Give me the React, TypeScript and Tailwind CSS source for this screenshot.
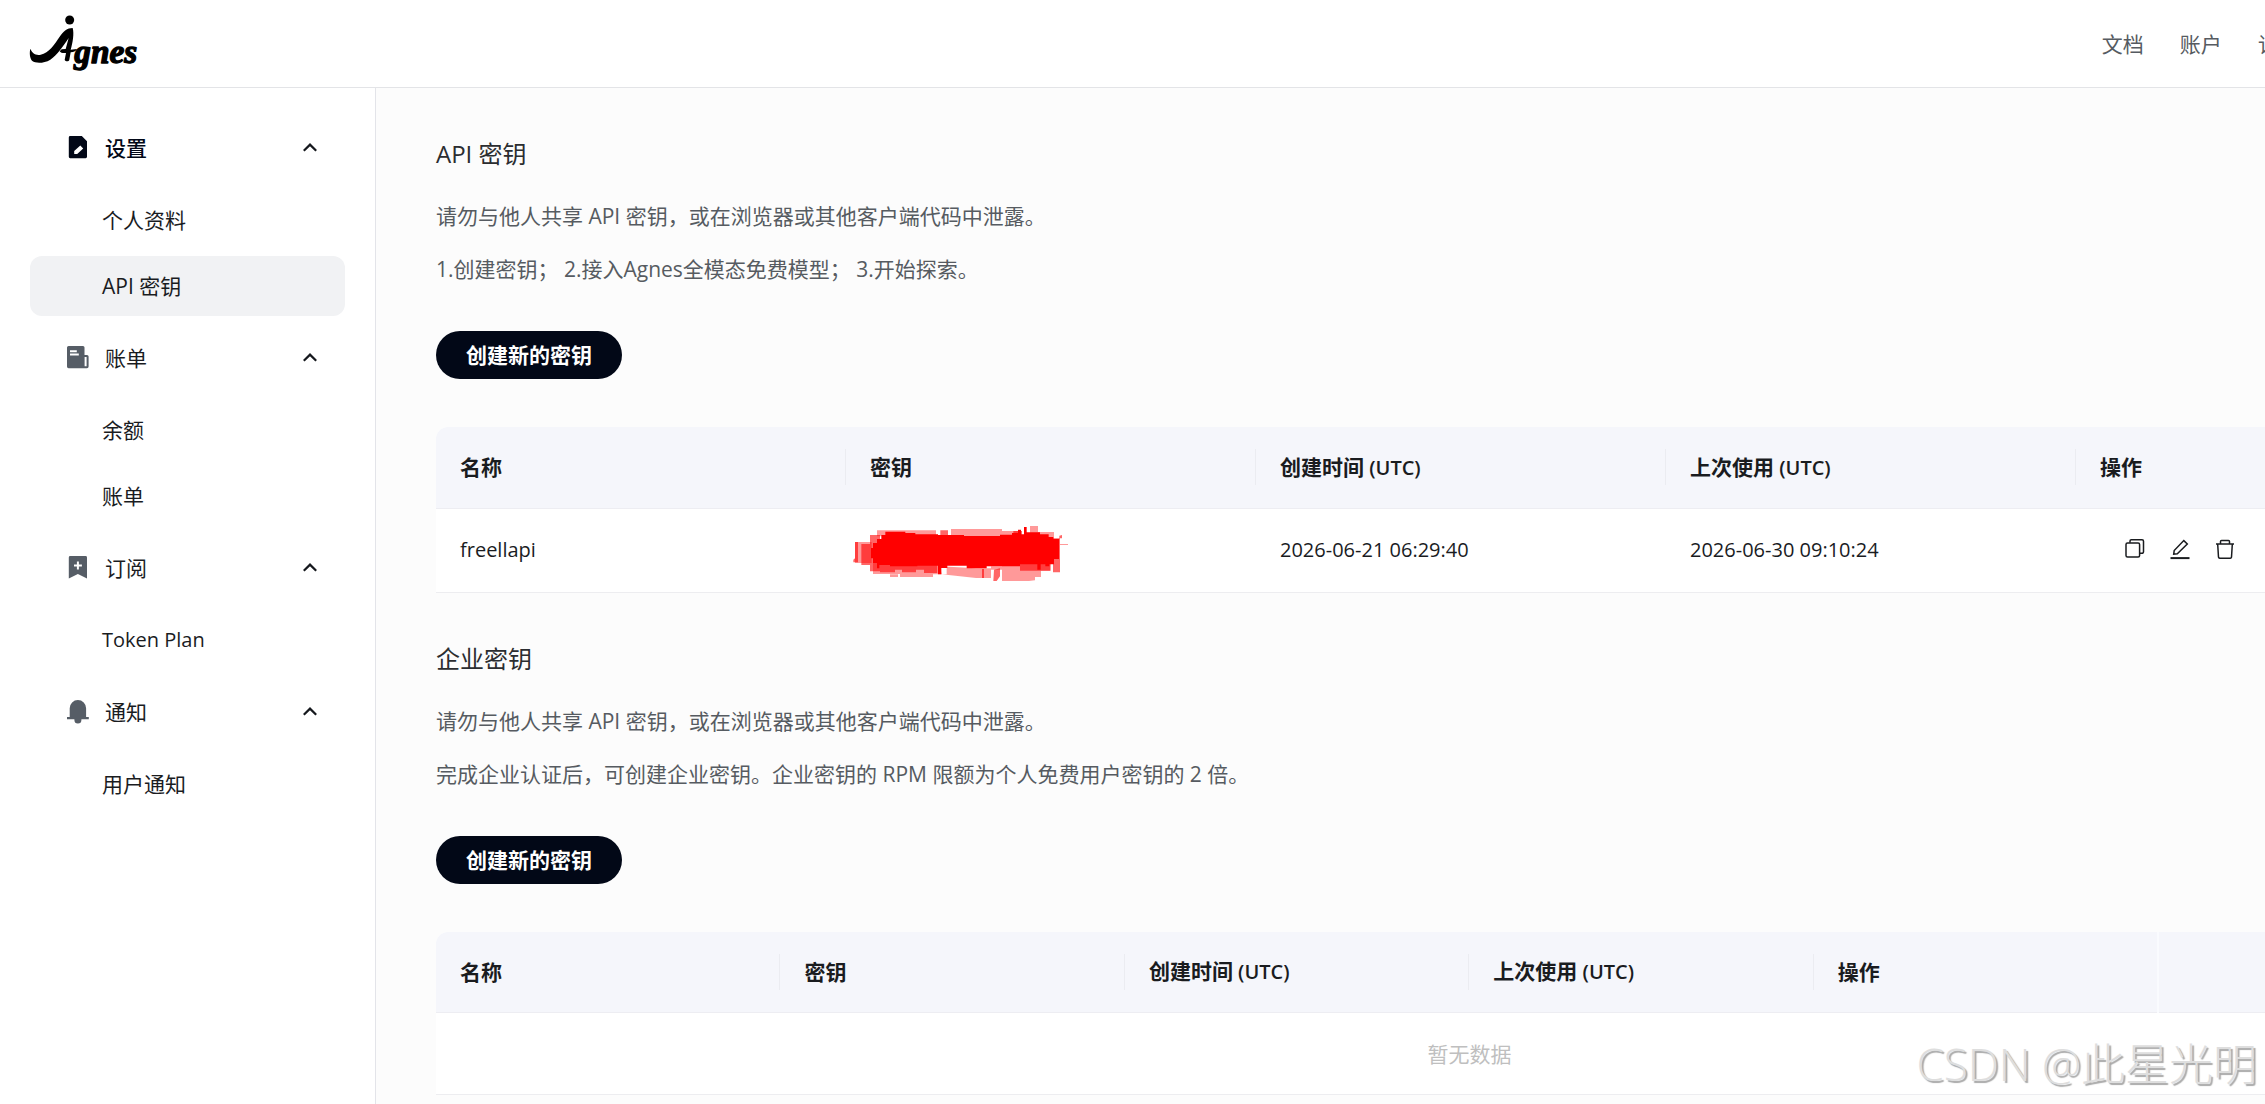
import type { ReactNode } from "react";

const SettingsIcon = () => (
  <svg viewBox="0 0 24 24" className="size-6 text-[#020817]" aria-hidden="true">
    <path
      fill="currentColor"
      fillRule="evenodd"
      d="M4.2 0H15.8L21 5.2V20.8A1.4 1.4 0 0 1 19.6 22.2H4.2A1.4 1.4 0 0 1 2.8 20.8V1.4A1.4 1.4 0 0 1 4.2 0ZM14.3 9.4L8.2 15V18.1H11.2L17.2 12.4Z"
    />
  </svg>
);

const BillIcon = () => (
  <svg viewBox="0 0 24 24" className="size-6 text-[#565d66]" aria-hidden="true">
    <path
      fill="currentColor"
      fillRule="evenodd"
      d="M2.6 0H17A1.5 1.5 0 0 1 18.5 1.5V9H21A1.6 1.6 0 0 1 22.6 10.6V20.6A1.6 1.6 0 0 1 21 22.2H2.6A1.6 1.6 0 0 1 1 20.6V1.6A1.6 1.6 0 0 1 2.6 0ZM4 4.2V6.2H10.8V4.2ZM4 7.6V9.600H12.8V7.6ZM18.6 11V20.2H20.6V11Z"
    />
  </svg>
);

const SubscribeIcon = () => (
  <svg viewBox="0 0 24 24" className="size-6 text-[#565d66]" aria-hidden="true">
    <path
      fill="currentColor"
      fillRule="evenodd"
      d="M4.2 0H19.6A1.4 1.4 0 0 1 21 1.4V22.4L11.9 18L2.8 22.4V1.4A1.4 1.4 0 0 1 4.2 0ZM10.9 5.4V8.4H8V10.4H10.9V13.4H12.9V10.4H15.9V8.4H12.9V5.4Z"
    />
  </svg>
);

const BellIcon = () => (
  <svg viewBox="0 0 24 24" className="size-6 text-[#565d66]" aria-hidden="true">
    <path
      fill="currentColor"
      d="M11.9 0A8.2 8.2 0 0 1 20.1 8.2V17H22.8V19.2H15.4A3.6 3.6 0 0 1 15.4 20A3.5 3.5 0 0 1 8.4 20A3.6 3.6 0 0 1 8.4 19.2H1V17H3.7V8.2A8.2 8.2 0 0 1 11.9 0Z"
    />
  </svg>
);

const Chevron = () => (
  <svg viewBox="0 0 24 24" className="size-6 text-[#15181d]" aria-hidden="true">
    <path d="M5.8 14.8L12 8.6L18.2 14.8" fill="none" stroke="currentColor" strokeWidth="2.2" />
  </svg>
);

const CopyIcon = () => (
  <svg viewBox="0 0 24 24" className="size-6" fill="none" stroke="currentColor" strokeWidth="1.5" aria-hidden="true">
    <rect x="3" y="5" width="13.6" height="14" rx="1.5" />
    <path d="M7 4.8V3A1.3 1.3 0 0 1 8.3 1.7H19A1.5 1.5 0 0 1 20.5 3.2V13.8A1.5 1.5 0 0 1 19 15.3H17" />
  </svg>
);

const EditIcon = () => (
  <svg viewBox="0 0 24 24" className="size-6" fill="none" stroke="currentColor" strokeWidth="1.5" aria-hidden="true">
    <path d="M15.8 2.6L19.3 6L9.3 15.8L5.7 16.2L6.2 12.6Z" />
    <path d="M2.5 20.1H21.5" strokeWidth="2" />
  </svg>
);

const TrashIcon = () => (
  <svg viewBox="0 0 24 24" className="size-6" fill="none" stroke="currentColor" strokeWidth="1.5" aria-hidden="true">
    <path d="M3 6H21M7.5 5.8V3.4A1 1 0 0 1 8.5 2.4H15.5A1 1 0 0 1 16.5 3.4V5.8M4.7 6.2L5.5 19.2A1.2 1.2 0 0 0 6.7 20.2H17.3A1.2 1.2 0 0 0 18.5 19.2L19.3 6.2" />
  </svg>
);

const Logo = () => (
  <svg viewBox="0 0 390 225" className="h-[75px] w-[130px]" role="img" aria-label="Agnes">
    <circle cx="149" cy="42" r="13.5" />
    <path d="M31 128C36 141 46 149 62 146C87 141 104 114 119 92C131 75 141 66 158 66C163 82 158 112 152 131L171 129C169 135 162 138 152 139L148 161C147 167 137 168 134 162L138 141C130 142 122 141 119 136L125 130L137 129L146 96C129 121 112 147 91 161C71 173 46 172 37 165C29 157 28 140 31 128Z" />
    <text
      x="163"
      y="170"
      fontSize="100"
      stroke="#000"
      strokeWidth="4"
      strokeLinejoin="round"
      className="font-['Liberation_Serif',serif] font-bold italic"
    >
      gnes
    </text>
  </svg>
);

/* Marker strokes that cover the secret key. */
const RedactedKey = () => (
  <svg viewBox="0 0 720 180" className="-ml-1.5 mt-1.5 h-[60px] w-[240px]" role="img" aria-label="已隐藏的密钥">
    <g fill="#ff0000">
      <g opacity="0.4">
        <path d="M111 22H288V40H111ZM333 18H486V40H333ZM570 9H594V36H570ZM486 24H540V40H486ZM594 27H642V50H594ZM45 57H95V120H45ZM99 120H180V153H99ZM180 120H279V162H180ZM279 120H320V154H279ZM300 130L305 154L408 165L408 136ZM408 136H453V165H408ZM453 130H486V140H453ZM486 120H585V172L567 174H486ZM585 120H603V162H585ZM603 100H630V143H603ZM150 154H174V162H150ZM660 63H684V66H660Z" />
      </g>
      <g opacity="0.6">
        <path d="M90 36H120V145H90ZM64 63H95V126H64ZM45 57H54V118H40V110L45 106ZM120 120H165V148H120ZM165 120H186V140H165ZM186 120H228V148H186ZM228 120H252V140H228ZM252 120H292V150H252ZM639 46H660V148H639ZM301 22H324V40H301ZM520 24H546V40H520ZM540 120H632V143H540ZM462 140L480 136V160L470 174H460ZM426 138H432V165H426ZM658 38L666 36V46H658Z" />
      </g>
      <path d="M136 26H196V30H226V34H294V36H372V39H480V35H516V30H534V20H543V34H552V12H560V28H600V34H626V42H640V48H657V108H642V124H628V130H616V124H602V140H592V124H540V130H440V136H380V128H322V135H304V154H294V128H232V130H150V126H118V136H111V120H99V106H93V75H99V60H111V48H124V36H136Z" />
    </g>
  </svg>
);

const menu: {
  title: string;
  icon: ReactNode;
  strong?: boolean;
  items: { label: string; active?: boolean }[];
}[] = [
  { title: "设置", icon: <SettingsIcon />, strong: true, items: [{ label: "个人资料" }, { label: "API 密钥", active: true }] },
  { title: "账单", icon: <BillIcon />, items: [{ label: "余额" }, { label: "账单" }] },
  { title: "订阅", icon: <SubscribeIcon />, items: [{ label: "Token Plan" }] },
  { title: "通知", icon: <BellIcon />, items: [{ label: "用户通知" }] },
];

const columns = [
  { label: "名称" },
  { label: "密钥" },
  { label: "创建时间", unit: "(UTC)" },
  { label: "上次使用", unit: "(UTC)" },
  { label: "操作" },
];

function TableHead({ spare = false }: { spare?: boolean }) {
  return (
    <thead className="bg-[#f5f6fb]">
      <tr className="h-[81px] border-b border-[#ededf2]">
        {columns.map((c, i) => (
          <th key={c.label} scope="col" className="relative px-6 text-left font-bold">
            {c.label}
            {c.unit && <span className="text-[20px] font-semibold"> {c.unit}</span>}
            {i < columns.length - 1 && (
              <span className="absolute top-1/2 right-0 h-9 w-px -translate-y-1/2 bg-[#ebecf1]" />
            )}
          </th>
        ))}
        {spare && <td className="border-l-2 border-[#fafbfe]" />}
      </tr>
    </thead>
  );
}

function Section({ title, lines, children }: { title: string; lines: string[]; children: ReactNode }) {
  return (
    <section className="flex flex-col items-start">
      <h2 className="text-2xl leading-9 text-[#2b2d30]">{title}</h2>
      <div className="mt-7 flex flex-col gap-[21px] leading-8 text-[#565b61]">
        {lines.map((l) => (
          <p key={l}>{l}</p>
        ))}
      </div>
      <button type="button" className="mt-[46px] h-12 rounded-full bg-[#020817] px-[30px] font-bold text-white">
        创建新的密钥
      </button>
      <div className="mt-12 w-full overflow-hidden rounded-t-xl bg-white">{children}</div>
    </section>
  );
}

export default function App() {
  return (
    <div
      lang="zh-CN"
      className="relative h-screen overflow-hidden bg-[#fcfcfc] font-['Open_Sans','Noto_Sans_CJK_SC',sans-serif] text-[21px] leading-8 text-[#1a1c1f]"
    >
      <div className="flex min-h-full w-[112%] flex-col">
        <header className="flex h-[88px] items-center justify-between border-b border-[#e3e4e7] bg-white pr-[237px] pl-5">
          <a href="#home">
            <Logo />
          </a>
          <nav className="flex gap-9 text-[#565b61]">
            <a href="#docs">文档</a>
            <a href="#account">账户</a>
            <a href="#subscribe">订阅</a>
          </nav>
        </header>

        <div className="flex flex-1">
          <aside className="w-[376px] shrink-0 border-r border-[#e3e4e9] bg-white px-[30px] pt-6">
            <nav className="flex flex-col gap-1.5">
              {menu.map((g) => (
                <div key={g.title} className="flex flex-col gap-1.5">
                  <button type="button" aria-expanded="true" className="flex h-[72px] items-center pr-[23px] pl-9">
                    {g.icon}
                    <span className={g.strong ? "ml-[15px] font-medium text-[#020817]" : "ml-[15px]"}>{g.title}</span>
                    <span className="ml-auto">
                      <Chevron />
                    </span>
                  </button>
                  {g.items.map((it) => (
                    <a
                      key={it.label}
                      href="#section"
                      className={
                        it.active
                          ? "flex h-[60px] items-center rounded-xl bg-[#f1f2f4] pl-[72px]"
                          : /^[\x20-\x7e]+$/.test(it.label)
                            ? "flex h-[60px] items-center rounded-xl pl-[72px] text-[20px]"
                            : "flex h-[60px] items-center rounded-xl pl-[72px]"
                      }
                    >
                      {it.label}
                    </a>
                  ))}
                </div>
              ))}
            </nav>
          </aside>

          <main className="flex min-w-0 flex-1 flex-col gap-12 pt-12 pr-[34px] pl-[60px]">
            <Section
              title="API 密钥"
              lines={[
                "请勿与他人共享 API 密钥，或在浏览器或其他客户端代码中泄露。",
                "1.创建密钥； 2.接入Agnes全模态免费模型； 3.开始探索。",
              ]}
            >
              <table className="w-full table-fixed border-collapse">
                <colgroup>
                  <col className="w-[410px]" />
                  <col className="w-[410px]" />
                  <col className="w-[410px]" />
                  <col className="w-[410px]" />
                  <col />
                </colgroup>
                <TableHead />
                <tbody>
                  <tr className="h-[84px] border-b border-[#ededf0] text-[20px]">
                    <td className="px-6">freellapi</td>
                    <td>
                      <RedactedKey />
                    </td>
                    <td className="px-6">2026-06-21 06:29:40</td>
                    <td className="px-6">2026-06-30 09:10:24</td>
                    <td className="pl-[47px]">
                      <div className="flex gap-[21px]">
                        <button type="button" aria-label="复制">
                          <CopyIcon />
                        </button>
                        <button type="button" aria-label="编辑">
                          <EditIcon />
                        </button>
                        <button type="button" aria-label="删除">
                          <TrashIcon />
                        </button>
                      </div>
                    </td>
                  </tr>
                </tbody>
              </table>
            </Section>

            <Section
              title="企业密钥"
              lines={[
                "请勿与他人共享 API 密钥，或在浏览器或其他客户端代码中泄露。",
                "完成企业认证后，可创建企业密钥。企业密钥的 RPM 限额为个人免费用户密钥的 2 倍。",
              ]}
            >
              <table className="w-full table-fixed border-collapse">
                <TableHead spare />
                <tbody>
                  <tr className="h-[82px] border-b border-[#ededf0]">
                    <td colSpan={6} className="text-center text-[#bfbfbf]">
                      暂无数据
                    </td>
                  </tr>
                </tbody>
              </table>
            </Section>
          </main>
        </div>
      </div>

      <div className="absolute right-2 bottom-2.5 text-[44px] leading-[60px] font-light whitespace-nowrap text-[#dedede] [text-shadow:2px_2px_1px_#a9a9a9]">
        CSDN @此星光明
      </div>
    </div>
  );
}
